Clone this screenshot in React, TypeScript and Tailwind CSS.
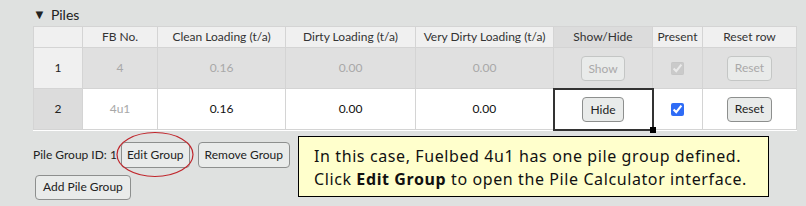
import React from 'react';

interface PileRow {
    id: number;
    fb: string;
    clean: string;
    dirty: string;
    veryDirty: string;
    shown: boolean;
}

const rows: PileRow[] = [
    { id: 1, fb: '4', clean: '0.16', dirty: '0.00', veryDirty: '0.00', shown: false },
    { id: 2, fb: '4u1', clean: '0.16', dirty: '0.00', veryDirty: '0.00', shown: true },
];

const headers = [
    { label: '', w: 'w-[49px]' },
    { label: 'FB No.', w: 'w-[75px]' },
    { label: 'Clean Loading (t/a)', w: 'w-[128px]' },
    { label: 'Dirty Loading (t/a)', w: 'w-[130px]' },
    { label: 'Very Dirty Loading (t/a)', w: 'w-[138px]' },
    { label: 'Show/Hide', w: 'w-[99px]' },
    { label: 'Present', w: 'w-[50px]' },
    { label: 'Reset row', w: 'w-[94px]' },
];

const SmallButton: React.FC<{ label: string; disabled?: boolean; className?: string }> = ({ label, disabled, className }) => (
    <button
        className={
            'h-[25px] shrink-0 whitespace-nowrap rounded-[4px] border bg-[#e9ebea] text-[12px] leading-none ' +
            (disabled ? 'border-[#c4c6c5] text-[#a9a9a9] ' : 'border-[#8d8f8e] text-[#222] ') +
            (className ?? '')
        }
    >
        {label}
    </button>
);

export default function App() {
    const cell = 'border border-[#d4d4d4] text-center text-[12px]';

    return (
        <div className="w-[806px] h-[206px] bg-[#dfe1e0] overflow-hidden" style={{ fontFamily: 'Lato, "Open Sans", sans-serif' }}>
            <div className="pl-[33px] pt-[3px] h-[26px] flex items-center gap-[5px] text-[14px] text-[#222]">
                <span className="text-[13px] leading-none">▼</span>
                <span>Piles</span>
            </div>

            <table className="ml-[33px] border-collapse table-fixed bg-white">
                <thead>
                    <tr className="h-[21px]">
                        {headers.map((h, i) => (
                            <th
                                key={i}
                                className={
                                    cell + ' font-normal text-[#333] ' + h.w + ' ' +
                                    (i === 5 ? 'bg-[#dcdcdc]' : 'bg-[#f0f0f0]')
                                }
                            >
                                {h.label}
                            </th>
                        ))}
                    </tr>
                </thead>
                <tbody>
                    {rows.map((r) => {
                        const ro = !r.shown;
                        const bg = ro ? 'bg-[#e0e0e0]' : 'bg-white';
                        const val = ro ? 'text-[#a8a8a8]' : 'text-[#111]';
                        return (
                            <tr key={r.id} className="h-[41px]">
                                <td className={cell + ' text-[#222] ' + (ro ? 'bg-[#f0f0f0]' : 'bg-[#dcdcdc]')}>{r.id}</td>
                                <td className={cell + ' text-[#a8a8a8] ' + bg}>{r.fb}</td>
                                <td className={cell + ' ' + val + ' ' + bg}>{r.clean}</td>
                                <td className={cell + ' ' + val + ' ' + bg}>{r.dirty}</td>
                                <td className={cell + ' ' + val + ' ' + bg}>{r.veryDirty}</td>
                                <td
                                    className={
                                        'text-center relative ' + bg + ' ' +
                                        (ro ? 'border border-[#d4d4d4]' : 'border-2 border-[#333]')
                                    }
                                >
                                    <SmallButton label={ro ? 'Show' : 'Hide'} disabled={ro} className={ro ? 'px-[6px]' : 'px-[7px]'} />
                                    {!ro && (
                                        <span className="absolute right-[-4px] bottom-[-4px] w-[6px] h-[6px] bg-black" />
                                    )}
                                </td>
                                <td className={cell + ' ' + bg}>
                                    <input
                                        type="checkbox"
                                        checked
                                        readOnly
                                        disabled={ro}
                                        className="w-[13px] h-[13px] align-middle accent-[#2f6cf6]"
                                    />
                                </td>
                                <td className={cell + ' ' + bg}>
                                    <SmallButton label="Reset" disabled={ro} className="px-[7px]" />
                                </td>
                            </tr>
                        );
                    })}
                </tbody>
            </table>

            <div className="flex items-start mt-[5px]">
                <div className="pl-[33px] w-[298px] shrink-0">
                    <div className="flex items-center h-[26px] mt-[6px] text-[12px] text-[#222] whitespace-nowrap">
                        <span className="mr-[4px]">Pile Group ID: 1</span>
                        <div className="relative shrink-0">
                            <SmallButton label="Edit Group" className="h-[26px] px-[5px] text-[12.5px]" />
                            <svg className="absolute left-[-5px] top-[-11px]" width="80" height="48" viewBox="0 0 80 48">
                                <ellipse cx="39" cy="23.5" rx="38" ry="22" fill="none" stroke="#c0272d" strokeWidth="1.2" />
                            </svg>
                        </div>
                        <SmallButton label="Remove Group" className="h-[26px] px-[6px] text-[12.5px] ml-[8px]" />
                    </div>
                    <SmallButton label="Add Pile Group" className="h-[24px] px-[7px] text-[12.5px] mt-[7px] ml-[2px]" />
                </div>
                <div
                    className="w-[471px] h-[61px] shrink-0 border border-black bg-[#ffffcc] pl-[15px] pt-[8px] text-[16px] leading-[23px] tracking-[0.6px] text-[#111] whitespace-nowrap"
                    style={{ fontFamily: '"Noto Sans", sans-serif' }}
                >
                    <div>In this case, Fuelbed 4u1 has one pile group defined.</div>
                    <div>
                        Click <b className="font-bold">Edit Group</b> to open the Pile Calculator interface.
                    </div>
                </div>
            </div>
        </div>
    );
}
